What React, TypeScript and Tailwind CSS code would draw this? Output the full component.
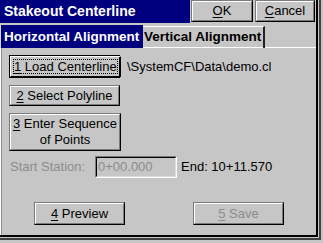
import clsx from 'clsx';
import type { ReactNode } from 'react';

const FONT = { fontFamily: '"Liberation Sans", Arial, sans-serif' };

function Btn({
  children,
  className,
  isDefault,
  disabled,
}: {
  children: ReactNode;
  className?: string;
  isDefault?: boolean;
  disabled?: boolean;
}) {
  return (
    <div
      className={clsx(
        'flex border',
        isDefault
          ? 'border-black'
          : 'border-t-[#7b7b7b] border-l-[#7b7b7b] border-r-black border-b-black',
        className
      )}
    >
      <div
        className={clsx(
          'flex flex-1 border border-t-white border-l-white border-r-[#7b7b7b] border-b-[#7b7b7b]',
          isDefault && 'border-r-black border-b-black'
        )}
      >
        <div
          className={clsx(
            'flex flex-1 items-center justify-center text-center text-[13px] leading-[16px] whitespace-nowrap',
            isDefault && 'm-[2px] border border-dotted border-black',
            disabled ? 'text-[#8c8c8c]' : 'text-black'
          )}
        >
          {children}
        </div>
      </div>
    </div>
  );
}

function U({ children }: { children: ReactNode }) {
  return <span className="underline decoration-1 underline-offset-[2px]">{children}</span>;
}

export default function App() {
  return (
    <div className="w-[323px] h-[243px] bg-[#c6c6c6] overflow-hidden" style={FONT}>
      <div className="w-[321px] h-[240px] border-r-2 border-b-2 border-[#424242] pr-px pb-px">
        <div className="h-full border-r-2 border-b-2 border-black flex flex-col">
          {/* title bar */}
          <div className="flex h-[23px] shrink-0">
            <div className="w-[190px] h-[23px] bg-[#00007f] text-white font-bold text-[14px] leading-[23px] pl-[4px] whitespace-nowrap">
              Stakeout Centerline
            </div>
            <Btn className="ml-px w-[62px] h-[22px]">
              <span>
                <U>O</U>K
              </span>
            </Btn>
            <Btn className="ml-[2px] w-[60px] h-[22px]">
              <span>
                <U>C</U>ancel
              </span>
            </Btn>
          </div>

          {/* tabs */}
          <div className="flex h-[25px] shrink-0 pt-[2px] relative">
            <div className="absolute left-0 right-0 bottom-0 h-px bg-white" />
            <div className="relative w-[143px] h-[23px] bg-[#00007f] text-white font-bold text-[13.5px] leading-[23px] pl-[3px] whitespace-nowrap border-l border-[#d8d8d8]">
              Horizontal Alignment
            </div>
            <div className="relative w-[122px] h-[22px] mt-px border-t border-white border-r-2 border-r-[#222] text-black font-bold text-[13.5px] leading-[20px] pl-[1px] whitespace-nowrap">
              Vertical Alignment
            </div>
          </div>

          {/* page */}
          <div className="flex-1 border-l border-white">
            <div className="h-full border-l border-[#8c8c8c] flex flex-col pt-[7px] pl-[7px]">
              <div className="flex items-center">
                <Btn isDefault className="w-[111px] h-[23px]">
                  <span>
                    <U>1</U> Load Centerline
                  </span>
                </Btn>
                <span className="ml-[7px] text-[13px] text-black whitespace-nowrap">
                  \SystemCF\Data\demo.cl
                </span>
              </div>

              <Btn className="mt-[7px] w-[111px] h-[21px]">
                <span>
                  <U>2</U> Select Polyline
                </span>
              </Btn>

              <Btn className="mt-[7px] w-[112px] h-[38px]">
                <span>
                  <U>3</U> Enter Sequence
                  <br />
                  of Points
                </span>
              </Btn>

              <div className="flex items-center mt-[5px] h-[22px]">
                <span className="w-[86px] pl-px text-[13px] text-[#8c8c8c] whitespace-nowrap">
                  Start Station:
                </span>
                <div className="w-[82px] h-[22px] border border-t-[#7b7b7b] border-l-[#7b7b7b] border-r-white border-b-white">
                  <div className="h-full border border-t-black border-l-black border-r-[#dedede] border-b-[#dedede] text-[13px] text-[#8c8c8c] leading-[18px] pl-px">
                    0+00.000
                  </div>
                </div>
                <span className="ml-[4px] text-[13px] text-black whitespace-nowrap">End: 10+11.570</span>
              </div>

              <div className="flex mt-[24px]">
                <Btn className="ml-[25px] w-[91px] h-[23px]">
                  <span>
                    <U>4</U> Preview
                  </span>
                </Btn>
                <Btn disabled className="ml-[68px] w-[91px] h-[23px]">
                  <span>
                    <U>5</U> Save
                  </span>
                </Btn>
              </div>
            </div>
          </div>
        </div>
      </div>
    </div>
  );
}
